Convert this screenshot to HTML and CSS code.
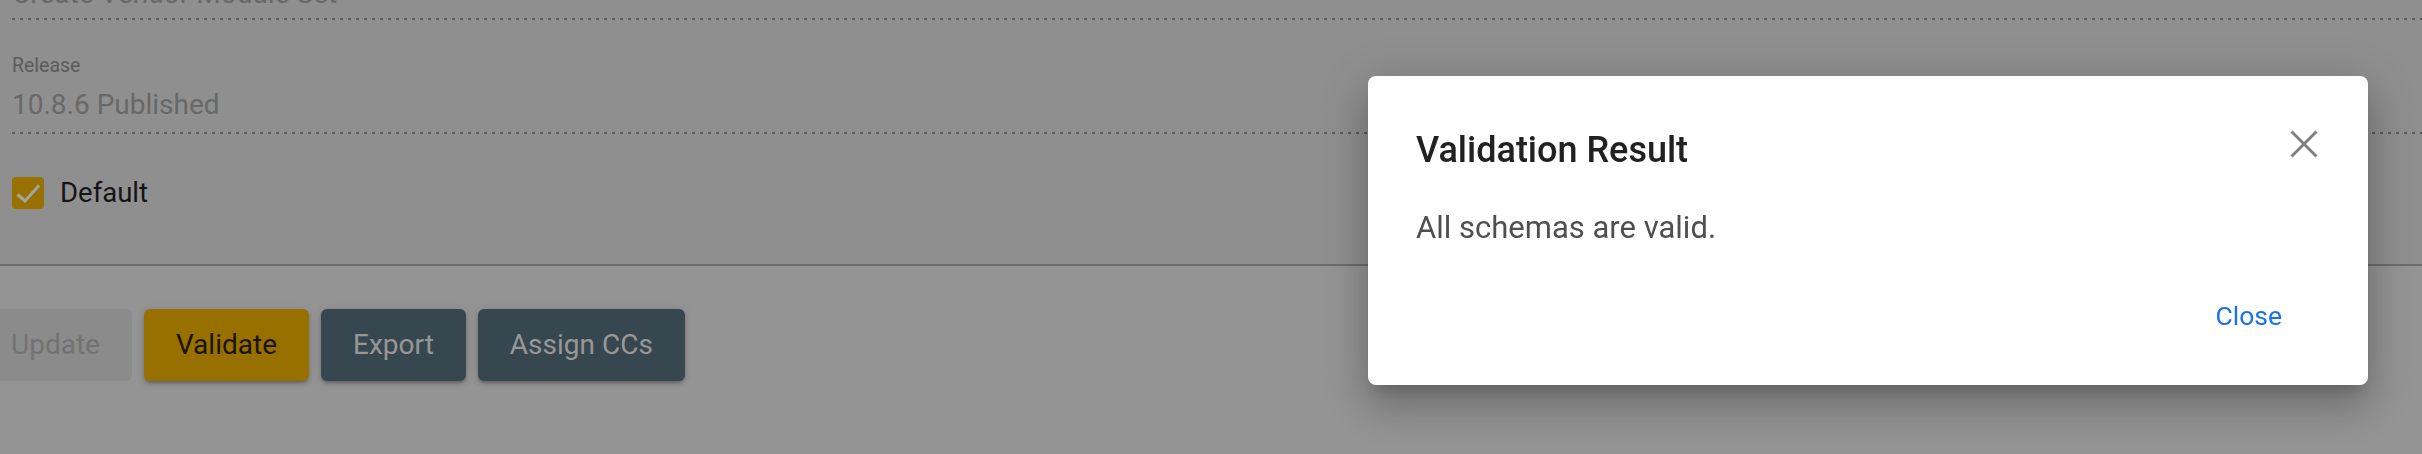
FILE: index.html
```html
<!DOCTYPE html>
<html lang="en">
<head>
<meta charset="utf-8">
<title>Validation Result</title>
<link rel="stylesheet" href="styles.css">
</head>
<body>
<div class="page">
  <section class="form">
    <div class="field field-cut">
      <div class="field-label">Name</div>
      <div class="field-value">Create Vendor Module Set</div>
    </div>
    <div class="field">
      <div class="field-label">Release</div>
      <div class="field-value">10.8.6 Published</div>
    </div>
    <label class="check-row">
      <span class="checkbox">
        <svg viewBox="0 0 32 32" width="32" height="32"><path d="M5.5 17.5 L13 24 L27 8.5" fill="none" stroke="#a4a4a4" stroke-width="3"/></svg>
      </span>
      <span class="check-text">Default</span>
    </label>
  </section>
  <div class="divider"></div>
  <section class="actions">
    <button class="btn btn-disabled">Update</button>
    <button class="btn btn-primary">Validate</button>
    <button class="btn btn-dark">Export</button>
    <button class="btn btn-dark">Assign CCs</button>
  </section>
</div>
<div class="backdrop">
  <div class="dialog">
    <div class="dialog-header">
      <h2 class="dialog-title">Validation Result</h2>
      <button class="dialog-x" aria-label="Close">
        <svg viewBox="0 0 40 40" width="40" height="40"><path d="M7.5 7.5 L32.5 32.5 M32.5 7.5 L7.5 32.5" stroke="#808080" stroke-width="3" fill="none"/></svg>
      </button>
    </div>
    <p class="dialog-body">All schemas are valid.</p>
    <div class="dialog-actions">
      <button class="text-btn">Close</button>
    </div>
  </div>
</div>
</body>
</html>
```

FILE: styles.css
```css
* { box-sizing: border-box; }
html, body { margin: 0; padding: 0; }
body {
  width: 2422px;
  height: 454px;
  overflow: hidden;
  background: #919191;
  font-family: Roboto, "Noto Sans", "Liberation Sans", sans-serif;
}
.page { display: flex; flex-direction: column; }
.form {
  display: flex;
  flex-direction: column;
  padding-left: 12px;
  padding-bottom: 55px;
  background: #8f8f8f;
}
.field {
  display: flex;
  flex-direction: column;
  padding-bottom: 9px;
  background-image: linear-gradient(to right, #595959 3px, transparent 3px);
  background-size: 8px 2px;
  background-repeat: repeat-x;
  background-position: left bottom;
}
.field + .field { margin-top: 34px; }
.field-cut { margin-top: -57px; padding-bottom: 6px; }
.field-label {
  font-size: 19.5px;
  line-height: 24px;
  color: #5c5c5c;
  margin-bottom: 9px;
}
.field-value {
  font-size: 28px;
  line-height: 36px;
  color: #686868;
  margin-bottom: 2px;
}
.check-row {
  display: flex;
  align-items: center;
  gap: 16px;
  margin-top: 43px;
  height: 32px;
}
.checkbox {
  width: 32px;
  height: 32px;
  border-radius: 4px;
  background: #987100;
  display: block;
}
.checkbox svg { display: block; }
.check-text {
  font-size: 27.5px;
  line-height: 32px;
  color: #151515;
}
.divider {
  height: 2px;
  background: #6c6c6c;
  box-shadow: 0 1px 1px rgba(0,0,0,0.08);
}
.actions {
  display: flex;
  gap: 12px;
  padding-top: 43px;
  margin-left: -21px;
  background: #949494;
  height: 188px;
}
.btn {
  height: 72px;
  padding: 0 32px;
  border: none;
  border-radius: 6px;
  font-family: inherit;
  font-size: 28px;
  line-height: 72px;
  cursor: pointer;
}
.btn-disabled {
  background: #8b8b8b;
  color: #727272;
}
.btn-primary {
  background: #977000;
  color: #1a1400;
  box-shadow: 0 3px 3px -2px rgba(0,0,0,.2), 0 3px 4px rgba(0,0,0,.14), 0 1px 8px rgba(0,0,0,.12);
}
.btn-dark {
  background: #36474f;
  color: #979797;
  box-shadow: 0 3px 3px -2px rgba(0,0,0,.2), 0 3px 4px rgba(0,0,0,.14), 0 1px 8px rgba(0,0,0,.12);
}
.backdrop {
  position: fixed;
  inset: 0;
}
.dialog {
  position: absolute;
  left: 1368px;
  top: 76px;
  width: 1000px;
  height: 309px;
  background: #ffffff;
  border-radius: 8px;
  padding-top: 50px;
  display: flex;
  flex-direction: column;
  box-shadow: 0 11px 15px -7px rgba(0,0,0,.2), 0 24px 38px 3px rgba(0,0,0,.14), 0 9px 46px 8px rgba(0,0,0,.12);
}
.dialog-header {
  display: flex;
  justify-content: space-between;
  align-items: flex-start;
  padding: 0 44px 0 48px;
  height: 48px;
}
.dialog-title {
  margin: 0;
  font-size: 36px;
  line-height: 48px;
  font-weight: 500;
  color: #212121;
}
.dialog-x {
  width: 40px;
  height: 40px;
  margin-top: -2px;
  padding: 0;
  border: none;
  background: transparent;
  cursor: pointer;
}
.dialog-x svg { display: block; }
.dialog-body {
  margin: 34px 0 0;
  padding-left: 48px;
  font-size: 31px;
  line-height: 40px;
  color: #4f4f4f;
}
.dialog-actions {
  display: flex;
  justify-content: flex-end;
  margin-top: 41px;
  padding-right: 62px;
}
.text-btn {
  height: 54px;
  padding: 0 24px;
  border: none;
  background: transparent;
  font-family: inherit;
  font-size: 26.5px;
  line-height: 54px;
  color: #1a73e8;
  cursor: pointer;
}
```
